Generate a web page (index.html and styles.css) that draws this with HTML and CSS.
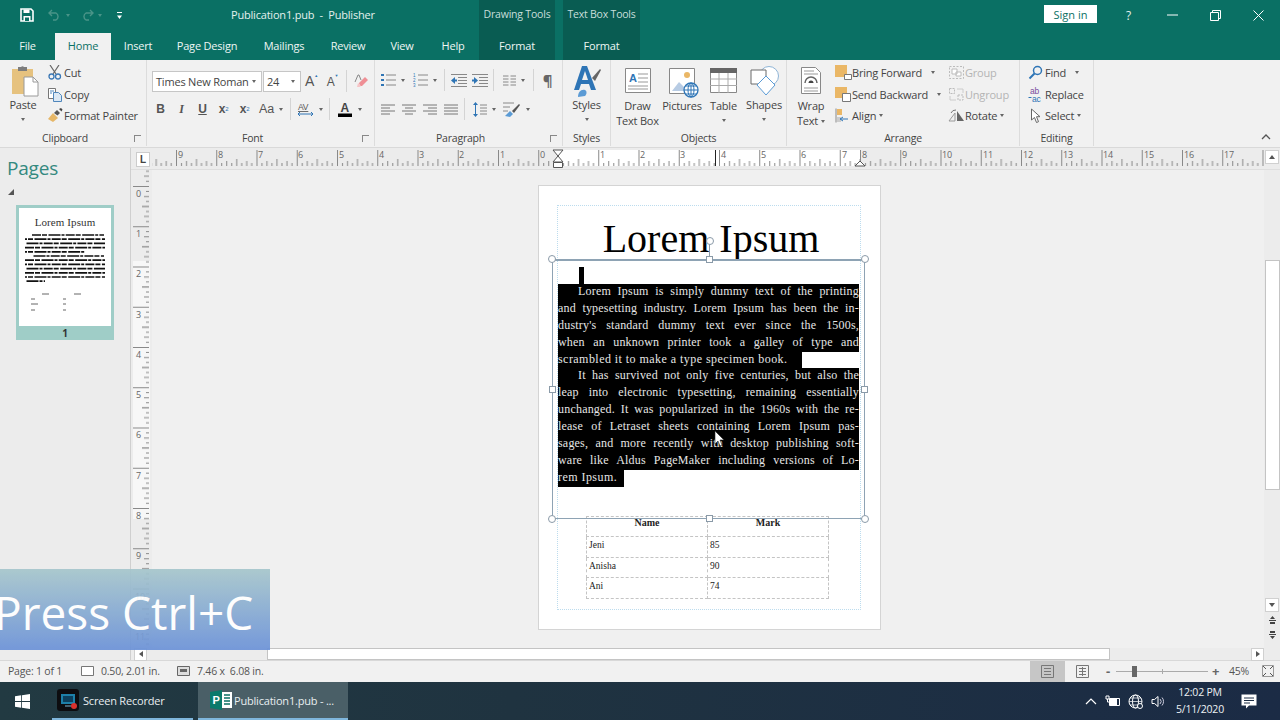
FILE: index.html
```html
<!DOCTYPE html>
<html>
<head>
    <meta charset="UTF-8">
    <title>Publication1.pub - Publisher</title>
    <link rel="stylesheet" href="styles.css">
</head>
<body>
<div class="app">

    <!-- title bar -->
    <div class="titlebar">
        <div class="qat">
            <svg class="save" width="14" height="14" viewBox="0 0 14 14"><path d="M1 1h10l2 2v10H1z" fill="none" stroke="#fff" stroke-width="1.6"/><path d="M3.500 1.500h6v3.500h-6zM3.500 8h7v5h-7z" fill="#fff"/><path d="M5 9.500h4v3.500H5z" fill="#0a7064"/></svg>
            <svg class="undo" width="14" height="12" viewBox="0 0 14 12"><path d="M4 1 1 4l3 3M1 4h7a4 4 0 0 1 0 7H5" fill="none" stroke="#4a9488" stroke-width="1.400"/></svg>
            <span class="caret dim"></span>
            <svg class="redo" width="14" height="12" viewBox="0 0 14 12"><path d="M10 1l3 3-3 3M13 4H6a4 4 0 0 0 0 7h3" fill="none" stroke="#4a9488" stroke-width="1.400"/></svg>
            <span class="caret dim"></span>
            <svg class="qat-more" width="7" height="9" viewBox="0 0 7 9"><path d="M1 1.500h5" stroke="#fff"/><path d="M1 4.500h5L3.500 8z" fill="#fff"/></svg>
        </div>
        <div class="doc-title">Publication1.pub &nbsp;-&nbsp; Publisher</div>
        <div class="tool-title drawing">Drawing Tools</div>
        <div class="tool-title textbox">Text Box Tools</div>
        <div class="win-controls">
            <button class="signin">Sign in</button>
            <span class="help">?</span>
            <svg class="win-min" width="11" height="2" viewBox="0 0 11 2"><path d="M0 1h11" stroke="#fff"/></svg>
            <svg class="win-max" width="11" height="11" viewBox="0 0 11 11"><path d="M.5 2.500h8v8h-8zM2.500 2.500v-2h8v8h-2" fill="none" stroke="#fff"/></svg>
            <svg class="win-close" width="11" height="11" viewBox="0 0 11 11"><path d="M.5.500l10 10M10.500.500l-10 10" stroke="#fff"/></svg>
        </div>
    </div>

    <!-- tabs -->
    <div class="tabs">
        <div class="tab t-file">File</div>
        <div class="tab t-home active">Home</div>
        <div class="tab t-insert">Insert</div>
        <div class="tab t-design">Page Design</div>
        <div class="tab t-mail">Mailings</div>
        <div class="tab t-review">Review</div>
        <div class="tab t-view">View</div>
        <div class="tab t-help">Help</div>
        <div class="tab t-format1">Format</div>
        <div class="tab t-format2">Format</div>
    </div>

    <!-- ribbon -->
    <div class="ribbon">
        <div class="group g-clip">
            <div class="group-body">
                <div class="big paste">
                    <svg width="28" height="33" viewBox="0 0 28 33"><path d="M1 5h21v25H1z" fill="#e6c27f"/><path d="M7 3h3a2 2 0 0 1 3 0h3v4H7z" fill="#7d7d7d"/><path d="M13 13h9l5 5v14H13z" fill="#fff" stroke="#9a9a9a"/><path d="M22 13v5h5" fill="none" stroke="#9a9a9a"/></svg>
                    <span class="big-label">Paste</span>
                    <span class="caret"></span>
                </div>
                <div class="stack">
                    <div class="item"><svg width="16" height="15" viewBox="0 0 16 15"><path d="M3 0l6 9M12 0L6 9" stroke="#666" stroke-width="1.200"/><circle cx="4.500" cy="11.500" r="2.500" fill="none" stroke="#3b78b5" stroke-width="1.300"/><circle cx="11" cy="11.500" r="2.500" fill="none" stroke="#3b78b5" stroke-width="1.300"/></svg><span>Cut</span></div>
                    <div class="item"><svg width="16" height="15" viewBox="0 0 16 15"><path d="M1.500 1.500h7v10h-7z" fill="#fff" stroke="#777"/><path d="M6.500 5.500h5l3 3v6h-8z" fill="#dbe8f4" stroke="#4f86bb"/><path d="M3 4h4M3 6h2" stroke="#4f86bb"/></svg><span>Copy</span></div>
                    <div class="item"><svg width="16" height="15" viewBox="0 0 16 15"><path d="M1 11l5-6 5 5-5 4z" fill="#e6b768"/><path d="M7 5l3-3 3 3-2.500 2.500z" fill="#555"/><path d="M12 1l2-1 1.500 1.500-1 2z" fill="#444"/></svg><span>Format Painter</span></div>
                </div>
            </div>
            <div class="group-label has-launcher">Clipboard<span class="launcher"></span></div>
        </div>

        <div class="group g-font">
            <div class="group-body col">
                <div class="row font-row1">
                    <div class="select font-name">Times New Roman<span class="caret"></span></div>
                    <div class="select font-size">24<span class="caret"></span></div>
                    <div class="tool glyph-a big-a">A<sup>&#9650;</sup></div>
                    <div class="tool glyph-a small-a">A<sup>&#9660;</sup></div>
                    <span class="sep"></span>
                    <div class="tool"><svg width="16" height="16" viewBox="0 0 16 16"><path d="M2 9l3-7h1l2 5" fill="none" stroke="#888"/><path d="M6 10l6-6 3 3-6 6H7z" fill="#ef8f95"/><path d="M5 10l3 3-1.500 1H4z" fill="#f6c4c6"/></svg></div>
                </div>
                <div class="row font-row2">
                    <div class="tool f-b">B</div>
                    <div class="tool f-i">I</div>
                    <div class="tool f-u">U</div>
                    <div class="tool f-x">x<sub>2</sub></div>
                    <div class="tool f-x">x<sup>2</sup></div>
                    <div class="tool wide f-aa">Aa<span class="caret"></span></div>
                    <span class="sep"></span>
                    <div class="tool wide"><svg width="17" height="15" viewBox="0 0 17 15"><text class="av-text" x="1" y="8">AV</text><path d="M1 12h15M3 10l-2 2 2 2M14 10l2 2-2 2" fill="none" stroke="#2f75b5"/></svg><span class="caret"></span></div>
                    <span class="sep"></span>
                    <div class="tool wide"><svg width="16" height="16" viewBox="0 0 16 16"><text class="color-a" x="3.500" y="11">A</text><path d="M1 12.500h14V16H1z" fill="#000"/></svg><span class="caret"></span></div>
                </div>
            </div>
            <div class="group-label has-launcher">Font<span class="launcher"></span></div>
        </div>

        <div class="group g-para">
            <div class="group-body col">
                <div class="row para-row1">
                    <div class="tool wide"><svg width="15" height="14" viewBox="0 0 15 14"><path d="M0 1h3v2H0zM0 6h3v2H0zM0 11h3v2H0z" fill="#2f75b5"/><path d="M5 2h10M5 7h10M5 12h10" stroke="#888"/></svg><span class="caret"></span></div>
                    <div class="tool wide"><svg width="15" height="14" viewBox="0 0 15 14"><text class="num-text" x="0" y="4">1</text><text class="num-text" x="0" y="9">2</text><text class="num-text" x="0" y="14">3</text><path d="M5 2h10M5 7h10M5 12h10" stroke="#888"/></svg><span class="caret"></span></div>
                    <span class="sep"></span>
                    <div class="tool indent"><svg width="16" height="13" viewBox="0 0 16 13"><path d="M0 .500h16M7 3.500h9M7 6.500h9M7 9.500h9M0 12.500h16" stroke="#888"/><path d="M0 6.500l4-3.500v7z" fill="#2f75b5"/><path d="M3 5.500h3v2H3z" fill="#2f75b5"/></svg></div>
                    <div class="tool"><svg width="16" height="13" viewBox="0 0 16 13"><path d="M0 .500h16M7 3.500h9M7 6.500h9M7 9.500h9M0 12.500h16" stroke="#888"/><path d="M6 6.500l-4-3.500v7z" fill="#2f75b5"/><path d="M0 5.500h3v2H0z" fill="#2f75b5"/></svg></div>
                    <span class="sep"></span>
                    <div class="tool wide cols"><svg width="13" height="11" viewBox="0 0 13 11"><path d="M0 1h5.500M0 4h5.500M0 7h5.500M0 10h5.500M7.500 1H13M7.500 4H13M7.500 7H13M7.500 10H13" stroke="#888"/></svg><span class="caret"></span></div>
                    <span class="sep"></span>
                    <div class="tool pilcrow">&para;</div>
                </div>
                <div class="row para-row2">
                    <div class="tool"><svg width="14" height="11" viewBox="0 0 14 11"><path d="M0 1h14M0 4h9M0 7h14M0 10h9" stroke="#777"/></svg></div>
                    <div class="tool"><svg width="14" height="11" viewBox="0 0 14 11"><path d="M0 1h14M3 4h8M0 7h14M3 10h8" stroke="#777"/></svg></div>
                    <div class="tool"><svg width="14" height="11" viewBox="0 0 14 11"><path d="M0 1h14M5 4h9M0 7h14M5 10h9" stroke="#777"/></svg></div>
                    <div class="tool"><svg width="14" height="11" viewBox="0 0 14 11"><path d="M0 1h14M0 4h14M0 7h14M0 10h14" stroke="#777"/></svg></div>
                    <span class="sep"></span>
                    <div class="tool wide"><svg width="14" height="15" viewBox="0 0 14 15"><path d="M2.500 1v13" stroke="#2f75b5"/><path d="M0 3l2.500-3L5 3zM0 12l2.500 3L5 12z" fill="#2f75b5"/><path d="M7 3h7M7 6h7M7 9h7M7 12h7" stroke="#888"/></svg><span class="caret"></span></div>
                    <div class="tool wide"><svg width="18" height="15" viewBox="0 0 18 15"><path d="M0 1h11M0 5h7M0 9h5" stroke="#888"/><path d="M2 14l5-5 3 3-3 3z" fill="#5b9bd5"/><path d="M9 9l7-7 1 1-6 8z" fill="#555"/></svg><span class="caret"></span></div>
                </div>
            </div>
            <div class="group-label has-launcher">Paragraph<span class="launcher"></span></div>
        </div>

        <div class="group g-styles">
            <div class="group-body">
                <div class="big b-styles">
                    <svg width="30" height="32" viewBox="0 0 30 32"><path d="M10 1h5l9 24h-5l-2-6H9l-2 6H2zM10 15h6l-3-9z" fill="#2e75b6" fill-rule="evenodd"/><path d="M20 13l8-9 1 1-6 11z" fill="#666"/><path d="M6 32c0-5 3-8 7-7 2 1 2 4 0 6z" fill="#5b9bd5"/></svg>
                    <span class="big-label">Styles</span>
                    <span class="caret"></span>
                </div>
            </div>
            <div class="group-label">Styles</div>
        </div>

        <div class="group g-objects">
            <div class="group-body">
                <div class="big b-draw">
                    <svg width="26" height="25" viewBox="0 0 26 25"><path d="M.5.500h25v24H.5z" fill="#fff" stroke="#888"/><text class="tb-a" x="4" y="14">A</text><path d="M13 6h10M13 10h10M13 14h10M3 18h20M3 21h20" stroke="#999"/></svg>
                    <span class="big-label">Draw<br>Text Box</span>
                </div>
                <div class="big b-pic">
                    <svg width="30" height="30" viewBox="0 0 30 30"><path d="M.5.500h25v25H.5z" fill="#fff" stroke="#888"/><circle cx="18" cy="7" r="3" fill="#eab766"/><path d="M3 23l7-9 6 6v3z" fill="#b8cce4"/><circle cx="22" cy="22" r="7" fill="#fff" stroke="#2e75b6" stroke-width="1.300"/><path d="M15 22h14M22 15v14M17 18h10M17 26h10" stroke="#2e75b6"/><ellipse cx="22" cy="22" rx="3" ry="7" fill="none" stroke="#2e75b6"/></svg>
                    <span class="big-label">Pictures</span>
                </div>
                <div class="big b-table">
                    <svg width="27" height="25" viewBox="0 0 27 25"><path d="M.5.500h26v24H.5z" fill="#fff" stroke="#888"/><path d="M0 0h27v5H0z" fill="#666"/><path d="M0 11h27M0 17.500h27M9 5v20M18 5v20" stroke="#aaa"/></svg>
                    <span class="big-label">Table</span>
                    <span class="caret"></span>
                </div>
                <div class="big b-shapes">
                    <svg width="30" height="30" viewBox="0 0 30 30"><circle cx="19" cy="10" r="9.500" fill="#fff" stroke="#8fb4d6"/><path d="M1 4h15v14H1z" fill="#fff" stroke="#6a6a6a"/><path d="M16 10l9 9-9 10-9-10z" fill="#fff" stroke="#5b9bd5"/></svg>
                    <span class="big-label">Shapes</span>
                    <span class="caret"></span>
                </div>
            </div>
            <div class="group-label">Objects</div>
        </div>

        <div class="group g-arrange">
            <div class="group-body">
                <div class="big b-wrap">
                    <svg width="20" height="27" viewBox="0 0 20 27"><path d="M.5.500h14l5 5v21H.5z" fill="#fff" stroke="#888"/><path d="M3 4h10M3 7h14M3 21h14M3 24h14" stroke="#999"/><path d="M4 16a6 6 0 0 1 12 0" fill="none" stroke="#666" stroke-width="1.500"/><path d="M7.500 16a2.500 2.500 0 0 1 5 0z" fill="#444"/></svg>
                    <span class="big-label">Wrap<br>Text<span class="caret inline"></span></span>
                </div>
                <div class="stack arrange-a">
                    <div class="item"><svg width="17" height="15" viewBox="0 0 17 15"><path d="M0 0h12v12H0z" fill="#eab766"/><path d="M9.500 9.500h7v5h-7z" fill="#fff" stroke="#777"/></svg><span>Bring Forward</span><span class="caret after"></span></div>
                    <div class="item"><svg width="17" height="15" viewBox="0 0 17 15"><path d="M0 0h12v11H0z" fill="#eab766"/><path d="M7.500 6.500h8v8h-8z" fill="#fff" stroke="#777"/></svg><span>Send Backward</span><span class="caret after"></span></div>
                    <div class="item"><svg width="17" height="15" viewBox="0 0 17 15"><path d="M1 .500v14" stroke="#888"/><path d="M2 1h5v6H2z" fill="#eab766"/><path d="M2 9h4v5H2z" fill="#ccc"/><path d="M13 11H6M8 9l-3 2 3 2" fill="none" stroke="#2e75b6"/></svg><span>Align</span><span class="caret tight"></span></div>
                </div>
                <div class="stack arrange-b">
                    <div class="item off"><svg width="17" height="15" viewBox="0 0 17 15"><path d="M1.500 1.500h14v12h-14z" fill="none" stroke="#bbb" stroke-dasharray="2 1.500"/><path d="M4 4h5v5H4zM8 7h5v4H8z" fill="#fff" stroke="#bbb"/></svg><span>Group</span></div>
                    <div class="item off"><svg width="17" height="15" viewBox="0 0 17 15"><path d="M1.500 1.500h5v5h-5zM10 8h5v5h-5z" fill="none" stroke="#bbb" stroke-dasharray="2 1"/><path d="M9 2h6v4M2 9v4h6" fill="none" stroke="#ccc"/></svg><span>Ungroup</span></div>
                    <div class="item"><svg width="17" height="15" viewBox="0 0 17 15"><path d="M1 13l6-8v8z" fill="none" stroke="#999"/><path d="M9 13V3l7 10z" fill="#666"/><path d="M3 5a5 5 0 0 1 5-3" fill="none" stroke="#777"/></svg><span>Rotate</span><span class="caret tight"></span></div>
                </div>
            </div>
            <div class="group-label">Arrange</div>
        </div>

        <div class="group g-edit">
            <div class="group-body">
                <div class="stack edit-stack">
                    <div class="item"><svg width="15" height="15" viewBox="0 0 15 15"><circle cx="9.500" cy="5.500" r="4" fill="none" stroke="#2e75b6" stroke-width="1.500"/><path d="M6.500 8.500l-5 5" stroke="#2e75b6" stroke-width="2"/></svg><span>Find</span><span class="caret after"></span></div>
                    <div class="item"><svg width="15" height="15" viewBox="0 0 15 15"><text class="rep-ab" x="2" y="7">ab</text><text class="rep-ac" x="4" y="14.500">ac</text><path d="M.500 10.500h3" stroke="#2e75b6"/></svg><span>Replace</span></div>
                    <div class="item"><svg width="15" height="16" viewBox="0 0 15 16"><path d="M3.500 1v11l3-2.500 2 5 2-.8-2-5h3.500z" fill="#fff" stroke="#666"/></svg><span>Select</span><span class="caret tight"></span></div>
                </div>
            </div>
            <div class="group-label">Editing</div>
        </div>

        <div class="ribbon-end">
            <svg width="10" height="6" viewBox="0 0 10 6"><path d="M1 5l4-4 4 4" fill="none" stroke="#555" stroke-width="1.300"/></svg>
        </div>
    </div>

    <!-- work area -->
    <div class="work">
        <div class="pages-pane">
            <div class="pages-title">Pages</div>
            <svg class="pages-arrow" width="6" height="6" viewBox="0 0 6 6"><path d="M6 0v6H0z" fill="#555"/></svg>
            <div class="thumb">
                <div class="thumb-page">
                    <div class="thumb-title">Lorem Ipsum</div>
                    <svg class="thumb-body" width="84" height="86" viewBox="0 0 84 86">
                        <path class="thumb-text" d="M9 2h72M2 14.600h80M2 27.200h80M2 39.800h80"/>
                        <path class="thumb-text off-a" d="M2 6.200h80M2 18.800h60M2 31.400h80M2 44h80"/>
                        <path class="thumb-text off-b" d="M2 10.400h80M9 23h72M2 35.600h80M2 48.200h20"/>
                        <path class="thumb-rule" d="M19 61h7M51 61h7M8 66h4M40 66h3M8 71h7M40 71h3M8 77h4M40 77h3"/>
                    </svg>
                </div>
                <div class="thumb-num">1</div>
            </div>
        </div>

        <div class="editor">
            <div class="hruler-row">
                <div class="corner">L</div>
                <svg class="hruler" width="1112" height="20" viewBox="152 148 1112 20">
                    <defs>
                        <pattern id="hl" x="176" y="150" width="40.25" height="18" patternUnits="userSpaceOnUse"><path class="tick" d="M.5 0v16M5.500 13v3M10.500 11v5M15.500 13v3M20.500 9v7M25.500 13v3M30.500 11v5M35.500 13v3"/></pattern>
                        <pattern id="hm" x="558" y="150" width="40.25" height="18" patternUnits="userSpaceOnUse"><path class="tick" d="M.5 0v16M5.500 13v3M10.500 11v5M15.500 13v3M20.500 9v7M25.500 13v3M30.500 11v5M35.500 13v3"/></pattern>
                        <pattern id="hr" x="860" y="150" width="40.25" height="18" patternUnits="userSpaceOnUse"><path class="tick" d="M.5 0v16M5.500 13v3M10.500 11v5M15.500 13v3M20.500 9v7M25.500 13v3M30.500 11v5M35.500 13v3"/></pattern>
                    </defs>
                    <rect x="558" y="150" width="302" height="16" fill="#fff"/>
                    <rect x="152" y="150" width="406" height="18" fill="url(#hl)"/>
                    <rect x="558" y="150" width="302" height="18" fill="url(#hm)"/>
                    <rect x="860" y="150" width="404" height="18" fill="url(#hr)"/>
                    <g class="rlabels">
                        <text x="178" y="158">9</text><text x="218" y="158">8</text><text x="258" y="158">7</text><text x="298" y="158">6</text><text x="339" y="158">5</text><text x="379" y="158">4</text><text x="419" y="158">3</text><text x="459" y="158">2</text><text x="500" y="158">1</text><text x="540" y="158">0</text>
                        <text x="600" y="158">1</text><text x="640" y="158">2</text><text x="680" y="158">3</text><text x="721" y="158">4</text><text x="761" y="158">5</text><text x="801" y="158">6</text><text x="842" y="158">7</text>
                        <text x="862" y="158">8</text><text x="902" y="158">9</text><text x="942" y="158">10</text><text x="983" y="158">11</text><text x="1023" y="158">12</text><text x="1063" y="158">13</text><text x="1103" y="158">14</text><text x="1144" y="158">15</text><text x="1184" y="158">16</text><text x="1224" y="158">17</text>
                    </g>
                    <path d="M553 150h10l-5 6 5 6h-10l5-6z" fill="#fff" stroke="#555"/>
                    <path d="M553.500 162.500h9v5h-9z" fill="#fff" stroke="#555"/>
                    <path d="M855 166l5-5 5 5z" fill="#fff" stroke="#555"/>
                    <path d="M715.500 150v16" stroke="#222"/>
                </svg>
                <div class="sb-btn up"><span class="tri-up"></span></div>
            </div>

            <div class="canvas-row">
                <svg class="vruler" width="21" height="478" viewBox="131 170 21 478">
                    <defs>
                        <pattern id="vt" x="131" y="186" width="18" height="40.25" patternUnits="userSpaceOnUse"><path class="tick" d="M2 .5h17M15 5.500h4M13 10.500h6M15 15.500h4M11 20.500h8M15 25.500h4M13 30.500h6M15 35.500h4"/></pattern>
                    </defs>
                    <rect x="133" y="261" width="17" height="258" fill="#f7f7f7"/>
                    <rect x="131" y="170" width="19" height="478" fill="url(#vt)"/>
                    <g class="rlabels">
                        <text x="136" y="197">0</text><text x="136" y="237">1</text><text x="136" y="277">2</text><text x="136" y="318">3</text><text x="136" y="358">4</text><text x="136" y="398">5</text><text x="136" y="438">6</text><text x="136" y="479">7</text><text x="136" y="519">8</text><text x="136" y="559">9</text><text x="135" y="600">10</text><text x="135" y="640">11</text>
                    </g>
                </svg>

                <div class="canvas">
                    <div class="page">
                        <div class="guide">
                            <h1 class="doc-head">Lorem Ipsum</h1>
                            <div class="para-mark"></div>
                            <div class="line just first">Lorem Ipsum is simply dummy text of the printing</div>
                            <div class="line just">and typesetting industry. Lorem Ipsum has been the in-</div>
                            <div class="line just">dustry's standard dummy text ever since the 1500s,</div>
                            <div class="line just">when an unknown printer took a galley of type and</div>
                            <div class="line end-a">scrambled it to make a type specimen book.</div>
                            <div class="line just first">It has survived not only five centuries, but also the</div>
                            <div class="line just">leap into electronic typesetting, remaining essentially</div>
                            <div class="line just">unchanged. It was popularized in the 1960s with the re-</div>
                            <div class="line just">lease of Letraset sheets containing Lorem Ipsum pas-</div>
                            <div class="line just">sages, and more recently with desktop publishing soft-</div>
                            <div class="line just">ware like Aldus PageMaker including versions of Lo-</div>
                            <div class="line end-b">rem Ipsum.</div>
                            <table class="marks">
                                <tr><th>Name</th><th>Mark</th></tr>
                                <tr><td>Jeni</td><td>85</td></tr>
                                <tr><td>Anisha</td><td>90</td></tr>
                                <tr><td>Ani</td><td>74</td></tr>
                            </table>
                        </div>

                        <div class="frame">
                            <span class="stem"></span>
                            <span class="hnd round rot"></span>
                            <span class="hnd round tl"></span>
                            <span class="hnd square tc"></span>
                            <span class="hnd round tr"></span>
                            <span class="hnd square ml"></span>
                            <span class="hnd square mr"></span>
                            <span class="hnd round bl"></span>
                            <span class="hnd square bc"></span>
                            <span class="hnd round br"></span>
                        </div>
                        <svg class="pointer" width="12" height="17" viewBox="0 0 12 17"><path d="M1 1v13l3-3 2 5 2-1-2-5h4z" fill="#fff" stroke="#222" stroke-width=".6"/></svg>
                    </div>
                </div>

                <div class="vscroll">
                    <div class="vthumb"></div>
                    <div class="sb-btn down"><span class="tri-down"></span></div>
                    <div class="sb-page"><svg width="7" height="8" viewBox="0 0 7 8"><path d="M3.500 0L6 3H1zM0 4h7v1H0zM1 6h5v2H1z" fill="#444"/></svg></div>
                    <div class="sb-page"><svg width="7" height="8" viewBox="0 0 7 8"><path d="M1 0h5v2H1zM0 3h7v1H0zM1 5h5L3.500 8z" fill="#444"/></svg></div>
                </div>
            </div>

            <div class="hscroll">
                <div class="sb-btn left"><span class="tri-left"></span></div>
                <div class="hthumb"></div>
                <div class="sb-btn right"><span class="tri-right"></span></div>
            </div>
        </div>
    </div>

    <!-- status bar -->
    <div class="status">
        <span class="st-page">Page: 1 of 1</span>
        <svg class="st-ic" width="13" height="10" viewBox="0 0 13 10"><path d="M.5.500h12v9H.5z" fill="#fff" stroke="#777"/></svg>
        <span class="st-pos">0.50, 2.01 in.</span>
        <svg class="st-ic" width="13" height="10" viewBox="0 0 13 10"><path d="M.5.500h12v9H.5z" fill="#ddd" stroke="#666"/><path d="M3 3h7v3H3z" fill="#666"/></svg>
        <span class="st-size">7.46 x &nbsp;6.08 in.</span>
        <div class="st-right">
            <div class="view-btn on"><svg width="13" height="13" viewBox="0 0 13 13"><path d="M.5.500h12v12H.5z" fill="none" stroke="#777"/><path d="M3 3.500h7M3 6.500h7M3 9.500h7" stroke="#777"/></svg></div>
            <div class="view-btn"><svg width="13" height="13" viewBox="0 0 13 13"><path d="M.5.500h12v12H.5z" fill="none" stroke="#777"/><path d="M6.500 2v9M3 3.500h7M3 6.500h7M3 9.500h7" stroke="#777"/></svg></div>
            <span class="zoom-sign minus">-</span>
            <div class="slider"><span class="slider-mid"></span><span class="slider-knob"></span></div>
            <span class="zoom-sign plus">+</span>
            <span class="zoom-val">45%</span>
            <svg class="fit" width="12" height="12" viewBox="0 0 12 12"><path d="M.5.500h11v11H.5z" fill="none" stroke="#999"/><path d="M1 1l3 3M11 1L8 4M1 11l3-3M11 11L8 8" stroke="#555"/></svg>
        </div>
    </div>

    <!-- taskbar -->
    <div class="taskbar">
        <div class="start"><svg width="15" height="15" viewBox="0 0 15 15"><path d="M0 2.200L6.200 1.300v5.800H0zM7 1.200L15 0v7.100H7zM0 7.900h6.200v5.800L0 12.800zM7 7.900h8V15l-8-1.200z" fill="#fff"/></svg></div>
        <div class="task recorder">
            <svg width="22" height="22" viewBox="0 0 22 22"><rect width="22" height="22" rx="3" fill="#0d0d10"/><path d="M4 5h14v10H4z" fill="#1d7fa8"/><path d="M6 7h10v6H6z" fill="#0d3f5c"/><path d="M8 17h6" stroke="#7fb6d0"/><circle cx="17" cy="17" r="3" fill="#d9322e"/></svg>
            <span>Screen Recorder</span>
        </div>
        <div class="task publisher">
            <svg width="22" height="20" viewBox="0 0 22 20"><path d="M10 2h12v16H10z" fill="#fff"/><path d="M14 5h6M14 8h6M14 11h6M14 14h6" stroke="#0a7064" stroke-width="1.500"/><path d="M0 2l12-2v20L0 18z" fill="#0a7a6b"/><text class="pub-p" x="2.500" y="14">P</text></svg>
            <span>Publication1.pub - ...</span>
        </div>
        <div class="tray">
            <svg width="12" height="7" viewBox="0 0 12 7"><path d="M1 6l5-5 5 5" fill="none" stroke="#fff" stroke-width="1.200"/></svg>
            <svg width="15" height="12" viewBox="0 0 15 12"><path d="M4.500 3.500h10v7h-10z" fill="none" stroke="#fff"/><path d="M5 4h7v6H5z" fill="#fff"/><path d="M1 1h3v3H1zM2.500 4v3h2" fill="none" stroke="#fff"/></svg>
            <svg width="15" height="15" viewBox="0 0 15 15"><circle cx="7.500" cy="7.500" r="6.500" fill="none" stroke="#fff"/><ellipse cx="7.500" cy="7.500" rx="3" ry="6.500" fill="none" stroke="#fff"/><path d="M1 7.500h13M2 4h11M2 11h11" stroke="#fff" stroke-width=".7"/><circle cx="12" cy="12" r="2.500" fill="#1c2d44" stroke="#fff"/></svg>
            <svg width="15" height="13" viewBox="0 0 15 13"><path d="M1 4.500h2.500L7 1.500v10l-3.500-3H1z" fill="none" stroke="#fff"/><path d="M9 4a3.500 3.500 0 0 1 0 5M11 2.500a6 6 0 0 1 0 8" fill="none" stroke="#ccd"/></svg>
        </div>
        <div class="clock"><div>12:02 PM</div><div>5/11/2020</div></div>
        <svg class="notify" width="16" height="15" viewBox="0 0 16 15"><path d="M.5.500h15v11H8l-3 3v-3H.5z" fill="#fff"/><path d="M3 4h10M3 6.500h10M3 9h6" stroke="#1c2d44"/></svg>
    </div>

    <!-- caption from the screen recorder, lies over the window -->
    <div class="caption">Press Ctrl+C</div>
</div>
</body>
</html>
```

FILE: styles.css
```css
* {
    box-sizing: border-box;
    margin: 0;
    padding: 0;
}

html, body {
    width: 1280px;
    height: 720px;
    overflow: hidden;
}

body {
    font-family: "Open Sans", "Noto Sans", sans-serif;
    font-size: 11px;
    letter-spacing: -.2px;
    color: #444;
    background: #f0f0f0;
}

svg {
    display: block;
    flex: none;
}

.app {
    position: relative;
    width: 1280px;
    height: 720px;
    overflow: hidden;
}

.caret {
    display: inline-block;
    flex: none;
    width: 0;
    height: 0;
    border-left: 2.5px solid transparent;
    border-right: 2.5px solid transparent;
    border-top: 3px solid #666;
}

.caret.dim {
    border-top-color: #4a9488;
}

/* title bar */
.titlebar {
    display: flex;
    height: 30px;
    background: #0a7064;
    color: #fff;
}

.qat {
    display: flex;
    align-items: center;
    width: 194px;
    padding-left: 20px;
}

.save { margin-right: 14px; }
.undo { margin-right: 4px; }
.redo { margin-left: 10px; margin-right: 4px; }
.qat-more { margin-left: 14px; }

.doc-title {
    width: 285px;
    padding-left: 37px;
    line-height: 29px;
    color: #e4f0ee;
}

.tool-title {
    line-height: 29px;
    text-align: center;
    font-size: 10.5px;
    color: #c8dfdb;
    background: #095c52;
}

.tool-title.drawing { width: 76px; }
.tool-title.textbox { width: 77px; margin-left: 8px; }

.win-controls {
    flex: 1;
    display: flex;
    align-items: center;
    padding-left: 404px;
}

.signin {
    width: 53px;
    height: 18px;
    margin-top: -2px;
    border: 0;
    background: #fff;
    color: #0a7064;
    font-family: inherit;
    font-size: 11px;
}

.help {
    margin-left: 29px;
    font-size: 12px;
    color: #e4f0ee;
}

.win-min { margin-left: 36px; }
.win-max { margin-left: 32px; }
.win-close { margin-left: 32px; }

/* tabs */
.tabs {
    display: flex;
    height: 30px;
    background: #0a7064;
}

.tab {
    padding-top: 8px;
    line-height: 15px;
    text-align: center;
    color: #eef6f4;
}

.tab.active {
    margin-top: 3px;
    padding-top: 5px;
    background: #f1f1f1;
    color: #0a7064;
}

.t-file { width: 55px; }
.t-home { width: 56px; }
.t-insert { width: 54px; }
.t-design { width: 84px; }
.t-mail { width: 70px; }
.t-review { width: 58px; }
.t-view { width: 50px; }
.t-help { width: 52px; }
.t-format1 { width: 76px; background: #095c52; }
.t-format2 { width: 77px; margin-left: 8px; background: #095c52; }

/* ribbon */
.ribbon {
    display: flex;
    height: 88px;
    background: #f1f1f1;
    border-bottom: 1px solid #d9d9d9;
}

.group {
    display: flex;
    flex-direction: column;
    height: 86px;
    border-right: 1px solid #dcdcdc;
}

.group-body {
    display: flex;
    height: 70px;
}

.group-body.col {
    flex-direction: column;
}

.group-label {
    position: relative;
    line-height: 16px;
    text-align: center;
    font-size: 10.5px;
    color: #444;
}

.group-label.has-launcher {
    padding-right: 16px;
}

.launcher {
    position: absolute;
    right: 5px;
    top: 5px;
    width: 7px;
    height: 7px;
    border-left: 1px solid #888;
    border-top: 1px solid #888;
}

.g-clip { width: 147px; }
.g-font { width: 228px; }
.g-para { width: 188px; }
.g-styles { width: 48px; }
.g-objects { width: 176px; }
.g-arrange { width: 233px; }
.g-edit { width: 74px; }

.ribbon-end {
    flex: 1;
    display: flex;
    justify-content: flex-end;
    align-items: flex-end;
    padding: 0 9px 7px 0;
}

.big {
    display: flex;
    flex-direction: column;
    align-items: center;
    padding-top: 5px;
}

.big-label {
    line-height: 15px;
    text-align: center;
    color: #444;
}

.big .caret {
    margin-top: 6px;
}

.big .caret.inline {
    margin: 0 0 2px 3px;
    vertical-align: middle;
}

.paste { width: 46px; padding-top: 4px; }
.paste > svg { margin-left: 3px; }
.b-styles { width: 47px; }
.b-draw { width: 47px; margin-left: 3px; }
.b-draw > svg { margin: 3px 0 5px; }
.b-pic { width: 42px; }
.b-pic > svg { margin: 3px 0 0 3px; }
.b-table { width: 41px; }
.b-table > svg { margin: 3px 0 5px; }
.b-shapes { width: 40px; }
.b-shapes > svg { margin: 1px 0 1px 2px; }
.b-wrap { width: 48px; }
.b-wrap > svg { margin: 2px 0 4px; }

.stack {
    display: flex;
    flex-direction: column;
    padding-top: 2px;
}

.item {
    display: flex;
    align-items: center;
    height: 21.5px;
    white-space: nowrap;
    color: #444;
}

.item.off {
    color: #b4b4b4;
}

.item .caret.after { margin-left: 9px; }
.item .caret.tight { margin-left: 3px; }

.g-clip .stack { margin-left: 1px; }
.g-clip .item > svg { margin-right: 1px; }
.arrange-a { width: 113px; }
.edit-stack { padding-left: 8px; }
.edit-stack .item > svg { margin-right: 2px; }

.row {
    display: flex;
    align-items: center;
    height: 22px;
}

.font-row1 { margin: 10px 0 6px; padding-left: 5px; }
.font-row2 { padding-left: 3px; }
.para-row1 { margin: 9px 0 7px; padding-left: 2px; }
.para-row2 { padding-left: 2px; }

.select {
    display: flex;
    align-items: center;
    justify-content: space-between;
    height: 21px;
    padding: 0 5px 0 3px;
    background: #fff;
    border: 1px solid #c6c6c6;
}

.font-name { width: 110px; }
.font-size { width: 38px; margin-left: 1px; }

.tool {
    display: flex;
    align-items: center;
    justify-content: center;
    flex: none;
    width: 21px;
    height: 22px;
    color: #555;
}

.tool.wide {
    width: 32px;
}

.tool.wide .caret {
    margin-left: 5px;
}

.tool.wide.cols {
    justify-content: flex-start;
    width: 33px;
    padding-left: 6px;
}

.sep {
    flex: none;
    width: 1px;
    height: 22px;
    margin: 0 3px;
    background: #d4d4d4;
}

.glyph-a { font-family: "Liberation Sans", sans-serif; align-items: flex-end; padding-bottom: 3px; }
.big-a { font-size: 14px; }
.small-a { font-size: 12px; }
.glyph-a sup { font-size: 4px; line-height: 1; align-self: flex-start; margin-top: 4px; color: #2f75b5; }

.f-b, .f-i, .f-u, .f-x, .f-aa {
    font-family: "Liberation Sans", sans-serif;
    font-size: 12px;
}

.f-b { font-weight: bold; }
.f-i { font-family: "Liberation Serif", serif; font-style: italic; font-weight: bold; }
.f-u { font-weight: bold; text-decoration: underline; }
.f-x { font-weight: bold; }
.f-x sub, .f-x sup { font-size: 6px; font-weight: normal; color: #2f75b5; line-height: 1; }
.f-aa { font-size: 12.5px; font-weight: normal; }
.pilcrow { font-size: 15px; font-weight: bold; color: #666; }

.av-text { font: 8.5px "Liberation Sans", sans-serif; fill: #555; text-decoration: underline; }
.color-a { font: bold 12px "Liberation Sans", sans-serif; fill: #444; }
.num-text { font: 4.5px "Liberation Sans", sans-serif; fill: #2f75b5; }
.tb-a { font: bold 11px "Liberation Sans", sans-serif; fill: #2e75b6; }
.rep-ab { font: 8.5px "Liberation Sans", sans-serif; fill: #7a4d9e; }
.rep-ac { font: 8.5px "Liberation Sans", sans-serif; fill: #2e75b6; }

/* work area */
.work {
    display: flex;
    height: 512px;
}

.pages-pane {
    width: 131px;
    flex: none;
    background: #ececec;
    border-right: 1px solid #cfcfcf;
}

.pages-title {
    padding: 6px 0 0 7px;
    line-height: 28px;
    font-family: "Open Sans", sans-serif;
    font-size: 19px;
    color: #34897f;
}

.pages-arrow {
    margin: 7px 0 0 8px;
}

.thumb {
    width: 98px;
    margin: 10px 0 0 16px;
    background: #9fcdc7;
    padding: 3px 3px 0;
}

.thumb-page {
    height: 118px;
    padding: 7px 0 0 4px;
    background: #fff;
}

.thumb-title {
    line-height: 14px;
    margin-left: -4px;
    text-align: center;
    font-family: "Liberation Serif", serif;
    font-size: 11px;
    letter-spacing: .1px;
    color: #333;
}

.thumb-body {
    margin-top: 4px;
}

.thumb-text {
    fill: none;
    stroke: #111;
    stroke-width: 1.7;
    stroke-dasharray: 9 1 5 1.500 12 1 3 1.200;
}

.thumb-text.off-a { stroke-dashoffset: 7; }
.thumb-text.off-b { stroke-dashoffset: 15; }

.thumb-rule {
    fill: none;
    stroke: #666;
    stroke-width: 1;
}

.thumb-num {
    height: 14px;
    line-height: 14px;
    text-align: center;
    font-size: 10px;
    font-weight: bold;
    color: #333;
}

.editor {
    flex: 1;
    display: flex;
    flex-direction: column;
    min-width: 0;
}

.hruler-row {
    display: flex;
    height: 22px;
    background: #ececec;
    border-bottom: 1px solid #dedede;
}

.corner {
    width: 14px;
    height: 15px;
    margin: 4px 0 0 5px;
    flex: none;
    background: #fff;
    border: 1px solid #ccc;
    text-align: center;
    font: bold 10px/13px "Liberation Sans", sans-serif;
    color: #444;
}

.hruler {
    margin-left: 2px;
}

.tick {
    fill: none;
    stroke: #888;
    stroke-width: 1;
}

.rlabels text {
    font: 9px "Open Sans", sans-serif;
    fill: #666;
}

.canvas-row {
    display: flex;
    height: 478px;
}

.vruler {
    background: #ececec;
}

.canvas {
    position: relative;
    flex: 1;
    background: #f0f0f0;
}

.page {
    position: absolute;
    left: 386px;
    top: 15px;
    width: 343px;
    height: 445px;
    padding: 20px 0 0 19px;
    background: #fff;
    border: 1px solid #d4d4d4;
}

.guide {
    width: 302px;
    height: 403px;
    outline: 1px dotted #bcdcee;
}

.doc-head {
    height: 61px;
    padding: 9px 0 0 4px;
    line-height: 48px;
    text-align: center;
    font-family: "Liberation Serif", serif;
    font-size: 40px;
    font-weight: normal;
    letter-spacing: 0;
    color: #000;
}

.para-mark {
    width: 5px;
    height: 17px;
    margin-left: 21px;
    background: #000;
}

.line {
    width: 301px;
    height: 16.9px;
    line-height: 14.500px;
    overflow: hidden;
    font-family: "Liberation Serif", serif;
    font-size: 12px;
    letter-spacing: .45px;
    color: #e6e6e6;
    background: #000;
    white-space: nowrap;
}

.line.just {
    white-space: normal;
    text-align: justify;
    text-align-last: justify;
    letter-spacing: .2px;
}

.line.first {
    padding-left: 20px;
}

.line.end-a { width: 244px; }
.line.end-b { width: 66px; }

.marks {
    width: 243px;
    height: 82px;
    margin: 29px 0 0 28px;
    border-collapse: collapse;
    table-layout: fixed;
    font-family: "Liberation Serif", serif;
    font-size: 9.500px;
    letter-spacing: 0;
    color: #222;
}

.marks tr {
    height: 20.5px;
}

.marks th, .marks td {
    border: 1px dashed #c4c4c4;
    padding: 0 2px 3px;
    text-align: left;
}

.marks th {
    vertical-align: top;
    padding-bottom: 0;
    line-height: 12px;
    text-align: center;
    font-size: 10px;
}

/* selection frame */
.frame {
    position: absolute;
    left: 13px;
    top: 73px;
    width: 313px;
    height: 260px;
    border: 1px solid #8ea3b4;
    border-top-width: 2px;
}

.hnd {
    position: absolute;
    background: #fff;
    border: 1px solid #8a9aa8;
}

.hnd.round {
    width: 8px;
    height: 8px;
    border-radius: 50%;
}

.hnd.square {
    width: 7px;
    height: 7px;
}

.tl { left: -5px; top: -6px; }
.tr { right: -5px; top: -6px; }
.bl { left: -5px; bottom: -5px; }
.br { right: -5px; bottom: -5px; }
.tc { left: 153px; top: -5px; }
.bc { left: 153px; bottom: -4px; }
.ml { left: -4px; top: 125px; }
.mr { right: -4px; top: 125px; }
.rot { left: 153px; top: -24px; }

.stem {
    position: absolute;
    left: 156px;
    top: -17px;
    width: 1px;
    height: 13px;
    background: #8a9aa8;
}

.pointer {
    position: absolute;
    left: 175px;
    top: 244px;
}

/* scroll bars */
.sb-btn {
    display: flex;
    align-items: center;
    justify-content: center;
    flex: none;
    width: 14px;
    height: 14px;
    background: #fff;
    border: 1px solid #d0d0d0;
}

.tri-up, .tri-down, .tri-left, .tri-right {
    width: 0;
    height: 0;
    border: 3px solid transparent;
}

.tri-up { border-bottom: 4px solid #555; border-top: 0; }
.tri-down { border-top: 4px solid #555; border-bottom: 0; }
.tri-left { border-right: 4px solid #555; border-left: 0; }
.tri-right { border-left: 4px solid #555; border-right: 0; }

.sb-btn.up {
    margin: 2px 1px 0 auto;
}

.vscroll {
    display: flex;
    flex-direction: column;
    align-items: center;
    flex: none;
    width: 16px;
    background: #ececec;
}

.vthumb {
    width: 15px;
    height: 230px;
    margin-top: 90px;
    background: #fff;
    border: 1px solid #c4c4c4;
}

.sb-btn.down {
    margin-top: 108px;
}

.sb-page {
    display: flex;
    align-items: center;
    justify-content: center;
    width: 14px;
    height: 15px;
}

.hscroll {
    display: flex;
    align-items: center;
    height: 12px;
    background: #ececec;
    padding-left: 3px;
}

.hscroll .sb-btn {
    width: 13px;
    height: 13px;
}

.hthumb {
    width: 843px;
    height: 12px;
    margin-left: 120px;
    background: #fff;
    border: 1px solid #c4c4c4;
}

.sb-btn.right {
    margin-left: 141px;
}

/* status bar */
.status {
    display: flex;
    align-items: center;
    height: 22px;
    padding: 0 0 1px 8px;
    background: #f1f1f1;
    border-top: 1px solid #d8d8d8;
    font-size: 10.5px;
    color: #555;
}

.st-page { width: 73px; }
.st-pos { width: 76px; margin-left: 7px; }
.st-size { margin-left: 7px; }

.st-right {
    display: flex;
    align-items: center;
    height: 100%;
    margin-left: auto;
}

.view-btn {
    display: flex;
    align-items: center;
    justify-content: center;
    width: 35px;
    height: 21px;
}

.view-btn.on {
    background: #c6c6c6;
}

.zoom-sign {
    width: 9px;
    text-align: center;
    font-size: 13px;
    font-weight: bold;
    color: #666;
}

.minus { margin: 0 3.5px; }
.plus { margin-left: 3px; }

.slider {
    position: relative;
    width: 92px;
    height: 1px;
    background: #aaa;
}

.slider-mid {
    position: absolute;
    left: 46px;
    top: -2px;
    width: 1px;
    height: 5px;
    background: #aaa;
}

.slider-knob {
    position: absolute;
    left: 16px;
    top: -5px;
    width: 5px;
    height: 11px;
    background: #666;
}

.zoom-val {
    width: 20px;
    margin-left: 9px;
    font-size: 10.5px;
}

.fit {
    margin: 0 6px 0 13px;
}

/* taskbar */
.taskbar {
    display: flex;
    align-items: center;
    height: 38px;
    background: linear-gradient(90deg, #223a42 0%, #1f3340 40%, #1b2b45 100%);
    color: #e8eef0;
}

.start {
    display: flex;
    justify-content: center;
    width: 44px;
}

.task {
    display: flex;
    align-items: center;
    height: 38px;
    border-bottom: 2px solid #7fb6dc;
    white-space: nowrap;
}

.task.recorder {
    width: 141px;
    margin-left: 8px;
    padding-left: 5px;
    gap: 4px;
}

.task.publisher {
    width: 150px;
    margin-left: 5px;
    padding-left: 12px;
    gap: 2px;
    background: #4a5f67;
}

.pub-p { font: bold 11px "Liberation Sans", sans-serif; fill: #fff; }

.tray {
    display: flex;
    align-items: center;
    gap: 8px;
    margin-left: 737px;
}

.clock {
    width: 62px;
    margin-left: 3px;
    line-height: 17px;
    text-align: center;
    font-size: 10.5px;
    color: #eef2f4;
}

.notify {
    margin-left: 10px;
}

/* caption */
.caption {
    position: absolute;
    left: 0;
    top: 569px;
    width: 270px;
    height: 81px;
    overflow: hidden;
    background: linear-gradient(180deg, #a6c6cc 0%, #6b92d8 100%);
    opacity: .92;
    font-family: "Open Sans", sans-serif;
    font-size: 46px;
    letter-spacing: 0;
    line-height: 86px;
    text-indent: -6px;
    color: #fff;
    white-space: nowrap;
}
```
